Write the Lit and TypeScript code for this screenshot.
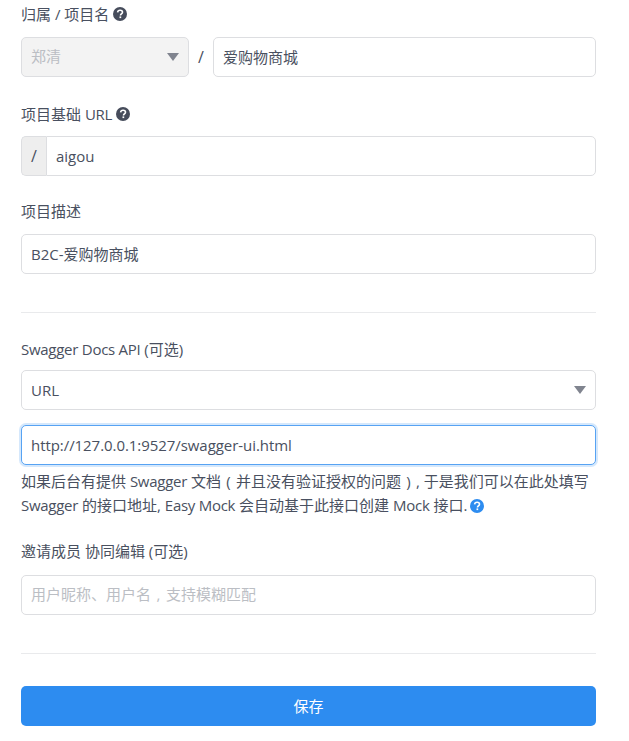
import { LitElement, html, css, svg } from "lit";
import { customElement } from "lit/decorators.js";

const help = (cls: string) => html`<svg class="help ${cls}" viewBox="0 0 14 14" aria-hidden="true">
  <circle cx="7" cy="7" r="7"></circle>
  ${svg`<path d="M4.6 5.4C4.7 4 5.7 3.2 7.1 3.2c1.4 0 2.4.8 2.4 2 0 1-.6 1.4-1.2 1.8-.6.4-.8.7-.8 1.4" fill="none" stroke="#fff" stroke-width="1.6"></path><rect x="6.5" y="9.4" width="1.7" height="1.7" fill="#fff"></rect>`}
</svg>`;

@customElement("app-root")
export class AppRoot extends LitElement {
  static styles = css`
    :host {
      display: block;
      box-sizing: border-box;
      width: 629px;
      height: 741px;
      overflow: hidden;
      padding: 2px 33px 0 21px;
      background: #fff;
      color: #495060;
      font: 15px/22px "Open Sans", "Noto Sans CJK SC", sans-serif;
    }
    * { box-sizing: border-box; }
    .field { margin-bottom: 24px; }
    .label {
      display: flex;
      align-items: center;
      gap: 4px;
      height: 23px;
      margin-bottom: 12px;
      white-space: pre;
    }
    .label.plain { height: 22px; }
    .label.up { padding-bottom: 2px; }
    .label.down { padding-top: 2px; }
    .label.tight { height: 22px; margin-bottom: 9px; padding-bottom: 2px; }
    .lat { letter-spacing: -0.27px; }
    .help { width: 14px; height: 14px; flex: none; }
    .help.dark circle { fill: #464c5b; }
    .help.blue { display: inline-block; vertical-align: -2px; margin-left: -1px; }
    .help.blue circle { fill: #2d8cf0; }
    .row { display: flex; align-items: center; }
    .sep { width: 24px; text-align: center; font-size: 16px; }
    .control {
      display: block;
      width: 100%;
      height: 40px;
      padding: 0 9px;
      border: 1px solid #dddee1;
      border-radius: 5px;
      background: #fff;
      color: #495060;
      font: inherit;
      outline: none;
    }
    .control.cjk { padding-bottom: 2px; }
    .placeholder { display: flex; align-items: center; color: #bbbec4; }
    .control.active {
      border-color: #57a3f3;
      box-shadow: 0 0 0 2px rgba(45, 140, 240, 0.2);
      letter-spacing: -0.06px;
    }
    .select { position: relative; display: flex; align-items: center; height: 40px; padding: 0 9px; border: 1px solid #dddee1; border-radius: 5px; color: #495060; }
    .select.disabled { width: 168px; flex: none; background: #f3f3f3; color: #bbbec4; padding-bottom: 2px; }
    .select.wide { width: 100%; }
    .arrow {
      position: absolute;
      right: 9px;
      top: 15px;
      width: 0;
      height: 0;
      border-left: 6px solid transparent;
      border-right: 6px solid transparent;
      border-top: 8px solid #80848f;
    }
    .group { display: flex; height: 40px; }
    .addon {
      width: 25px;
      flex: none;
      display: flex;
      align-items: center;
      justify-content: center;
      background: #eee;
      border: 1px solid #dddee1;
      border-right: none;
      border-radius: 5px 0 0 5px;
      font-size: 16px;
    }
    .group .control { border-radius: 0 5px 5px 0; }
    .grow { flex: 1; min-width: 0; }
    .swagger { margin-bottom: 15px; }
    .tip { margin: 4px 0 0; line-height: 24px; color: #495060; }
    .tip-wrap { margin-bottom: 24px; }
    .punct { display: inline-block; width: 15px; text-align: center; }
    hr { height: 1px; margin: 0; border: none; background: #e9eaec; }
    .hr1 { margin: 38px 0 26px; }
    .hr2 { margin: 38px 0 32px; }
    .save {
      display: block;
      width: 100%;
      height: 40px;
      border: none;
      border-radius: 5px;
      background: #2d8cf0;
      color: #fff;
      font: inherit;
    }
  `;

  render() {
    return html`
      <div class="field">
        <div class="label"><span>归属 / 项目名</span>${help("dark")}</div>
        <div class="row">
          <div class="select disabled">郑清<span class="arrow"></span></div>
          <span class="sep">/</span>
          <input class="control grow cjk" .value=${"爱购物商城"} />
        </div>
      </div>
      <div class="field">
        <div class="label down"><span>项目基础 <span class="lat">URL</span></span>${help("dark")}</div>
        <div class="group">
          <div class="addon">/</div>
          <input class="control grow" .value=${"aigou"} />
        </div>
      </div>
      <div>
        <div class="label plain">项目描述</div>
        <input class="control cjk" .value=${"B2C-爱购物商城"} />
      </div>
      <hr class="hr1" />
      <div class="swagger">
        <div class="label tight"><span><span class="lat">Swagger Docs API</span> (可选)</span></div>
        <div class="select wide">URL<span class="arrow"></span></div>
      </div>
      <div class="tip-wrap">
        <input class="control active" .value=${"http://127.0.0.1:9527/swagger-ui.html"} />
        <p class="tip">如果后台有提供 <span class="lat">Swagger</span> 文档<span class="punct">(</span>并且没有验证授权的问题<span class="punct">)</span>, 于是我们可以在此处填写 <span class="lat">Swagger</span> 的接口地址, <span class="lat">Easy Mock</span> 会自动基于此接口创建 <span class="lat">Mock</span> 接口. ${help("blue")}</p>
      </div>
      <div>
        <div class="label plain up">邀请成员 协同编辑 (可选)</div>
        <div class="control placeholder cjk">用户昵称、用户名<span class="punct">,</span>支持模糊匹配</div>
      </div>
      <hr class="hr2" />
      <button class="save">保存</button>
    `;
  }
}
